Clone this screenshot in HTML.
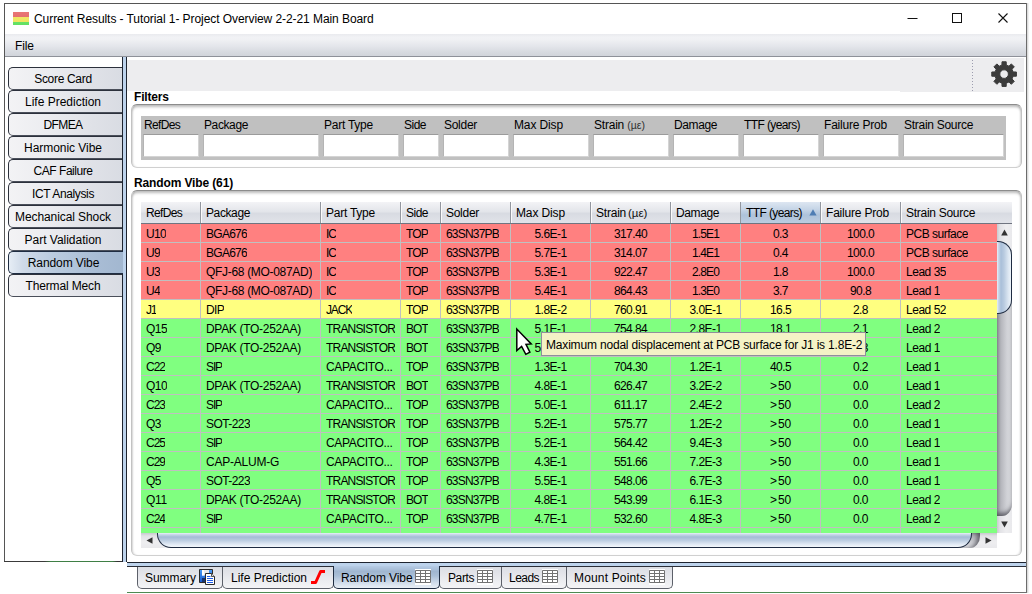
<!DOCTYPE html>
<html><head><meta charset="utf-8"><title>Current Results</title>
<style>
*{box-sizing:border-box;margin:0;padding:0}
html,body{width:1032px;height:594px;overflow:hidden;background:#fff}
body{position:relative;font-family:"Liberation Sans",sans-serif;font-size:12px;color:#000;line-height:1}
.abs{position:absolute}
.t{position:absolute;white-space:nowrap;line-height:14px;height:14px}
/* window frame */
#frameL{left:4px;top:3px;width:1px;height:559px;background:#555}
#frameT{left:4px;top:3px;width:1023px;height:1px;background:#555}
#frameR{left:1026px;top:3px;width:1px;height:590px;background:#6c6c6c;box-shadow:1px 0 0 #dcdcdc,2px 0 0 #f0f0f0}
#frameB{left:4px;top:561px;width:123px;height:1px;background:linear-gradient(90deg,#3a3a3a 0,#3a3a3a 33%,#3f7f45 38%,#3f7f45 88%,#333 92%)}
#botline{left:127px;top:592px;width:900px;height:1px;background:linear-gradient(90deg,#4e8a52 0,#4e8a52 85%,#707070 97%)}
/* menubar */
#menubar{left:5px;top:34px;width:1021px;height:22px;background:linear-gradient(#e9eaee 0%,#f1f2f5 14%,#f0f1f4 25%,#e4e6eb 55%,#d6d9df 85%,#d1d4db 100%)}
#menuline{left:5px;top:56px;width:1021px;height:1px;background:#8e9199}
/* splitter */
#spl1{left:122px;top:57px;width:1px;height:505px;background:#1e2430}
#spl2{left:123px;top:57px;width:3px;height:505px;background:#bdd3ec}
#spl3{left:126px;top:57px;width:1px;height:505px;background:#1e2430}
/* side tabs */
.stab{position:absolute;left:8px;width:114px;height:23px;border:1px solid #2c313c;border-bottom-color:#4a4f5a;border-right:none;border-radius:5px 0 0 5px;background:linear-gradient(90deg,#f3f3f5 0%,#ebecf0 35%,#dfe1e7 75%,#d9dce3 100%);text-align:center;line-height:23px;padding-right:5px}
.stab.sel{background:linear-gradient(90deg,#e6edf5 0%,#cfdae8 12%,#b9cade 40%,#a9bdd5 75%,#a2b7d0 100%);width:115px;border-color:#1f2d42;z-index:3}

#tb1{left:127px;top:60px;width:774px;height:31px;background:#ededef}
#tb2{left:900px;top:58px;width:124px;height:34px;background:#ededef}
#tbsep{left:972px;top:60px;width:1px;height:32px;background:repeating-linear-gradient(#9c9cae 0,#9c9cae 1px,transparent 1px,transparent 3px)}
.bold{font-weight:bold}
.mu{font-size:10.5px;color:#303030;letter-spacing:0}
.panel{position:absolute;border:1px solid #c2c2c2;border-top-color:#8c8c8c;border-bottom-color:#d0d0d0;border-radius:6px;background:#fff;box-shadow:inset 0 3px 3px -1px rgba(0,0,0,.27), inset 2px 0 2px -1px rgba(0,0,0,.13), inset -2px 0 2px -1px rgba(0,0,0,.13)}
#fgrey{left:141px;top:116px;width:865px;height:44px;background:#c0c0c0}
.ff{position:absolute;top:134px;height:23px;background:#fff;border:1px solid #d4d4d4;border-top-color:#9b9b9b;border-left-color:#b4b4b4}
.fl{top:118px}
/* table */
#thead{left:141px;top:202px;width:871px;height:22px;background:linear-gradient(#f3f3f6 0%,#e3e5ea 45%,#d8dbe2 55%,#e1e3e9 100%);border-bottom:1px solid #6f7480}
.th{position:absolute;top:202px;height:21px;border-right:1px solid #93979f;box-shadow:1px 0 0 #fafafb}
.th.sorted{background:linear-gradient(#dde6f1 0%,#c2d2e5 40%,#adc2da 62%,#bccde1 100%)}
.tht{top:206px}
.row{position:absolute;left:141px;width:856px;height:19px;border-bottom:1px solid #c0c0c0}
.r{background:#ff8080}.y{background:#ffff80}.g{background:#80ff80}
.vg{position:absolute;top:224px;width:1px;height:309px;background:#c0c0c0}
.c{position:absolute;top:3px;height:14px;line-height:14px;white-space:nowrap;overflow:hidden}
.ctr{text-align:center}

/* scrollbars */
#vsb{left:997px;top:224px;width:15px;height:309px;background:linear-gradient(90deg,#c8c9ce 0,#e2e2e6 3px,#eeeef0 60%,#e9e9ec 100%)}
#hsb{left:141px;top:533px;width:856px;height:15px;background:linear-gradient(#c8c9ce 0,#e2e2e6 3px,#eeeef0 60%,#e9e9ec 100%)}
#vtrack{left:997px;top:250px;width:15px;height:266px;background:linear-gradient(90deg,#96979e 0%,#b4b5bb 25%,#d0d1d6 65%,#dcdde1 100%);border-radius:0 0 10px 0/0 0 12px 0;box-shadow:inset 0 -4px 4px -1px rgba(40,40,50,.6)}
#htrack{left:170px;top:533px;width:810px;height:15px;background:linear-gradient(#96979e 0%,#b4b5bb 25%,#d0d1d6 65%,#dcdde1 100%);border-radius:0 0 10px 0/0 0 12px 0;box-shadow:inset -4px 0 4px -1px rgba(40,40,50,.6)}
#vthumb{left:997px;top:241px;width:15px;height:73px;border:1.4px solid #1f2c42;border-left:none;border-radius:0 14px 14px 0/0 14px 14px 0;background:linear-gradient(90deg,#e8eff7 0,#c9d8e9 1.5px,#a9bfd9 4px,#b9cbe0 50%,#dbe6f2 80%,#edf3f9 100%)}
#hthumb{left:157px;top:533px;width:815px;height:15px;border:1.4px solid #1f2c42;border-top:none;border-radius:0 0 14px 14px/0 0 14px 14px;background:linear-gradient(#e8eff7 0,#c9d8e9 1.5px,#a4bbd6 4px,#b9cbe0 50%,#e0e9f4 80%,#f4f8fc 100%)}
/* tooltip */
#tip{left:541px;top:332px;width:325px;height:24px;background:#f4f2c6;border:1px solid #8f8f9c}
/* bottom tabs */
#bt1{left:127px;top:562px;width:899px;height:1px;background:#1e2430}
#bt2{left:127px;top:563px;width:899px;height:3px;background:#bdd3ec}
#bt3{left:127px;top:566px;width:899px;height:1px;background:#2a2e38;z-index:2}
.btab{position:absolute;top:567px;height:22px;border:1px solid #5c6069;border-top:none;border-radius:0 0 5px 5px;background:linear-gradient(#dcdee4 0%,#e4e5ea 35%,#eeeff2 75%,#f4f4f6 100%)}
.btab.sel{top:566px;height:23px;border-color:#1f2d42;background:linear-gradient(#b6cce6 0%,#a0b6d0 25%,#aabfd7 45%,#cfdbea 75%,#e9eff6 100%);z-index:3}
</style></head>
<body>
<div class="abs" id="frameT"></div><div class="abs" id="frameL"></div><div class="abs" id="frameR"></div><div class="abs" id="frameB"></div><div class="abs" id="botline"></div>
<div class="abs" style="left:13px;top:12px;width:16px;height:13px;background:linear-gradient(#e97676 0,#e57070 5px,#efe766 5px,#f1e560 10px,#66e266 10px,#62e062 13px)"></div>
<div class="t" id="title" style="left:34px;top:12px;letter-spacing:-0.07px">Current Results - Tutorial 1- Project Overview 2-2-21 Main Board</div>
<svg class="abs" style="left:900px;top:8px" width="120" height="22" viewBox="0 0 120 22"><path d="M7.5 10.5h10" stroke="#111" stroke-width="1" fill="none"/><rect x="52.5" y="5.5" width="9" height="9" stroke="#111" stroke-width="1" fill="none"/><path d="M98.5 5.5l9 9M107.5 5.5l-9 9" stroke="#111" stroke-width="1.1" fill="none"/></svg>
<div class="abs" id="menubar"></div><div class="abs" id="menuline"></div>
<div class="t" id="mfile" style="left:15px;top:39px;letter-spacing:-0.1px">File</div>
<div class="abs" id="spl1"></div><div class="abs" id="spl2"></div><div class="abs" id="spl3"></div>
<div class="stab" style="top:67px"><span style="letter-spacing:-0.32px">Score Card</span></div>
<div class="stab" style="top:90px"><span style="letter-spacing:-0.00px">Life Prediction</span></div>
<div class="stab" style="top:113px"><span style="letter-spacing:-0.60px">DFMEA</span></div>
<div class="stab" style="top:136px"><span style="letter-spacing:-0.04px">Harmonic Vibe</span></div>
<div class="stab" style="top:159px"><span style="letter-spacing:-0.46px">CAF Failure</span></div>
<div class="stab" style="top:182px"><span style="letter-spacing:-0.37px">ICT Analysis</span></div>
<div class="stab" style="top:205px"><span style="letter-spacing:-0.09px">Mechanical Shock</span></div>
<div class="stab" style="top:228px"><span style="letter-spacing:-0.01px">Part Validation</span></div>
<div class="stab sel" style="top:251px"><span style="letter-spacing:-0.09px">Random Vibe</span></div>
<div class="stab" style="top:274px"><span style="letter-spacing:-0.14px">Thermal Mech</span></div>
<div class="abs" id="tb1"></div><div class="abs" id="tb2"></div><div class="abs" id="tbsep"></div>
<svg class="abs" style="left:989px;top:59px" width="30" height="30" viewBox="0 0 30 30"><path d="M12.93 6.06 L13.00 2.78 L17.20 2.78 L17.27 6.06 L19.96 7.17 L22.33 4.90 L25.30 7.87 L23.03 10.24 L24.14 12.93 L27.42 13.00 L27.42 17.20 L24.14 17.27 L23.03 19.96 L25.30 22.33 L22.33 25.30 L19.96 23.03 L17.27 24.14 L17.20 27.42 L13.00 27.42 L12.93 24.14 L10.24 23.03 L7.87 25.30 L4.90 22.33 L7.17 19.96 L6.06 17.27 L2.78 17.20 L2.78 13.00 L6.06 12.93 L7.17 10.24 L4.90 7.87 L7.87 4.90 L10.24 7.17Z M19.40 15.10 A4.3 4.3 0 1 0 10.80 15.10 A4.3 4.3 0 1 0 19.40 15.10Z" fill="#3b3b3b" fill-rule="evenodd" stroke="#3b3b3b" stroke-width="1" stroke-linejoin="round"/></svg>
<div class="t bold" id="lfilters" style="left:134px;top:90px;letter-spacing:-0.19px">Filters</div>
<div class="panel" style="left:131px;top:104px;width:891px;height:64px"></div>
<div class="abs" id="fgrey"></div>
<div class="ff" style="left:143px;width:56px"></div>
<div class="t fl" style="left:144px;letter-spacing:-0.67px">RefDes</div>
<div class="ff" style="left:203px;width:116px"></div>
<div class="t fl" style="left:204px;letter-spacing:-0.39px">Package</div>
<div class="ff" style="left:323px;width:76px"></div>
<div class="t fl" style="left:324px;letter-spacing:-0.24px">Part Type</div>
<div class="ff" style="left:403px;width:36px"></div>
<div class="t fl" style="left:404px;letter-spacing:-0.50px">Side</div>
<div class="ff" style="left:443px;width:66px"></div>
<div class="t fl" style="left:444px;letter-spacing:-0.28px">Solder</div>
<div class="ff" style="left:513px;width:76px"></div>
<div class="t fl" style="left:514px;letter-spacing:-0.13px">Max Disp</div>
<div class="ff" style="left:593px;width:76px"></div>
<div class="t fl" style="left:594px;letter-spacing:-0.22px">Strain <span class="mu">(µε)</span></div>
<div class="ff" style="left:673px;width:66px"></div>
<div class="t fl" style="left:674px;letter-spacing:-0.39px">Damage</div>
<div class="ff" style="left:743px;width:76px"></div>
<div class="t fl" style="left:744px;letter-spacing:-0.61px">TTF (years)</div>
<div class="ff" style="left:823px;width:76px"></div>
<div class="t fl" style="left:824px;letter-spacing:-0.20px">Failure Prob</div>
<div class="ff" style="left:903px;width:101px"></div>
<div class="t fl" style="left:904px;letter-spacing:-0.28px">Strain Source</div>
<div class="t bold" id="lrv" style="left:134px;top:176px;letter-spacing:-0.13px">Random Vibe (61)</div>
<div class="panel" style="left:131px;top:190px;width:891px;height:366px"></div>
<div class="abs" id="thead"></div>
<div class="th" style="left:141px;width:60px"></div>
<div class="t tht" style="left:146px;letter-spacing:-0.67px">RefDes</div>
<div class="th" style="left:201px;width:120px"></div>
<div class="t tht" style="left:206px;letter-spacing:-0.39px">Package</div>
<div class="th" style="left:321px;width:80px"></div>
<div class="t tht" style="left:326px;letter-spacing:-0.24px">Part Type</div>
<div class="th" style="left:401px;width:40px"></div>
<div class="t tht" style="left:406px;letter-spacing:-0.50px">Side</div>
<div class="th" style="left:441px;width:70px"></div>
<div class="t tht" style="left:446px;letter-spacing:-0.28px">Solder</div>
<div class="th" style="left:511px;width:80px"></div>
<div class="t tht" style="left:516px;letter-spacing:-0.13px">Max Disp</div>
<div class="th" style="left:591px;width:80px"></div>
<div class="t tht" style="left:596px;letter-spacing:-0.22px">Strain<span class="mu" style="margin-left:2px;font-size:11.5px;color:#111">(µε)</span></div>
<div class="th" style="left:671px;width:70px"></div>
<div class="t tht" style="left:676px;letter-spacing:-0.39px">Damage</div>
<div class="th sorted" style="left:741px;width:80px"></div>
<div class="t tht" style="left:746px;letter-spacing:-0.61px">TTF (years)</div>
<div class="th" style="left:821px;width:80px"></div>
<div class="t tht" style="left:826px;letter-spacing:-0.20px">Failure Prob</div>
<div class="t tht" style="left:906px;letter-spacing:-0.28px">Strain Source</div>
<svg class="abs" style="left:809px;top:209px" width="8" height="7" viewBox="0 0 8 7"><path d="M4 0.3L7.6 6.6H0.4Z" fill="#4f7db3"/></svg>
<div class="row r" style="top:224px"><span class="c" style="left:5px;letter-spacing:-0.67px">U10</span><span class="c" style="left:65px;letter-spacing:-0.73px">BGA676</span><span class="c" style="left:185px;letter-spacing:-1.00px">IC</span><span class="c" style="left:265px;letter-spacing:-0.82px">TOP</span><span class="c" style="left:305px;letter-spacing:-0.80px">63SN37PB</span><span class="c ctr" style="left:370px;width:79px;letter-spacing:-0.56px">5.6E-1</span><span class="c ctr" style="left:450px;width:79px;letter-spacing:-0.62px">317.40</span><span class="c ctr" style="left:530px;width:69px;letter-spacing:-0.87px">1.5E1</span><span class="c ctr" style="left:600px;width:79px;letter-spacing:-0.56px">0.3</span><span class="c ctr" style="left:680px;width:79px;letter-spacing:-0.61px">100.0</span><span class="c" style="left:765px;letter-spacing:-0.49px">PCB surface</span></div>
<div class="row r" style="top:243px"><span class="c" style="left:5px;letter-spacing:-0.67px">U9</span><span class="c" style="left:65px;letter-spacing:-0.73px">BGA676</span><span class="c" style="left:185px;letter-spacing:-1.00px">IC</span><span class="c" style="left:265px;letter-spacing:-0.82px">TOP</span><span class="c" style="left:305px;letter-spacing:-0.80px">63SN37PB</span><span class="c ctr" style="left:370px;width:79px;letter-spacing:-0.56px">5.7E-1</span><span class="c ctr" style="left:450px;width:79px;letter-spacing:-0.62px">314.07</span><span class="c ctr" style="left:530px;width:69px;letter-spacing:-0.87px">1.4E1</span><span class="c ctr" style="left:600px;width:79px;letter-spacing:-0.56px">0.4</span><span class="c ctr" style="left:680px;width:79px;letter-spacing:-0.61px">100.0</span><span class="c" style="left:765px;letter-spacing:-0.49px">PCB surface</span></div>
<div class="row r" style="top:262px"><span class="c" style="left:5px;letter-spacing:-0.67px">U3</span><span class="c" style="left:65px;letter-spacing:-0.31px">QFJ-68 (MO-087AD)</span><span class="c" style="left:185px;letter-spacing:-1.00px">IC</span><span class="c" style="left:265px;letter-spacing:-0.82px">TOP</span><span class="c" style="left:305px;letter-spacing:-0.80px">63SN37PB</span><span class="c ctr" style="left:370px;width:79px;letter-spacing:-0.56px">5.3E-1</span><span class="c ctr" style="left:450px;width:79px;letter-spacing:-0.62px">922.47</span><span class="c ctr" style="left:530px;width:69px;letter-spacing:-0.87px">2.8E0</span><span class="c ctr" style="left:600px;width:79px;letter-spacing:-0.56px">1.8</span><span class="c ctr" style="left:680px;width:79px;letter-spacing:-0.61px">100.0</span><span class="c" style="left:765px;letter-spacing:-0.48px">Lead 35</span></div>
<div class="row r" style="top:281px"><span class="c" style="left:5px;letter-spacing:-0.67px">U4</span><span class="c" style="left:65px;letter-spacing:-0.31px">QFJ-68 (MO-087AD)</span><span class="c" style="left:185px;letter-spacing:-1.00px">IC</span><span class="c" style="left:265px;letter-spacing:-0.82px">TOP</span><span class="c" style="left:305px;letter-spacing:-0.80px">63SN37PB</span><span class="c ctr" style="left:370px;width:79px;letter-spacing:-0.56px">5.4E-1</span><span class="c ctr" style="left:450px;width:79px;letter-spacing:-0.62px">864.43</span><span class="c ctr" style="left:530px;width:69px;letter-spacing:-0.87px">1.3E0</span><span class="c ctr" style="left:600px;width:79px;letter-spacing:-0.56px">3.7</span><span class="c ctr" style="left:680px;width:79px;letter-spacing:-0.59px">90.8</span><span class="c" style="left:765px;letter-spacing:-0.45px">Lead 1</span></div>
<div class="row y" style="top:300px"><span class="c" style="left:5px;letter-spacing:-1.34px">J1</span><span class="c" style="left:65px;letter-spacing:-0.67px">DIP</span><span class="c" style="left:185px;letter-spacing:-1.17px">JACK</span><span class="c" style="left:265px;letter-spacing:-0.82px">TOP</span><span class="c" style="left:305px;letter-spacing:-0.80px">63SN37PB</span><span class="c ctr" style="left:370px;width:79px;letter-spacing:-0.56px">1.8E-2</span><span class="c ctr" style="left:450px;width:79px;letter-spacing:-0.62px">760.91</span><span class="c ctr" style="left:530px;width:69px;letter-spacing:-0.56px">3.0E-1</span><span class="c ctr" style="left:600px;width:79px;letter-spacing:-0.59px">16.5</span><span class="c ctr" style="left:680px;width:79px;letter-spacing:-0.56px">2.8</span><span class="c" style="left:765px;letter-spacing:-0.48px">Lead 52</span></div>
<div class="row g" style="top:319px"><span class="c" style="left:5px;letter-spacing:-0.56px">Q15</span><span class="c" style="left:65px;letter-spacing:-0.31px">DPAK (TO-252AA)</span><span class="c" style="left:185px;letter-spacing:-0.81px">TRANSISTOR</span><span class="c" style="left:265px;letter-spacing:-0.89px">BOT</span><span class="c" style="left:305px;letter-spacing:-0.80px">63SN37PB</span><span class="c ctr" style="left:370px;width:79px;letter-spacing:-0.56px">5.1E-1</span><span class="c ctr" style="left:450px;width:79px;letter-spacing:-0.62px">754.84</span><span class="c ctr" style="left:530px;width:69px;letter-spacing:-0.56px">2.8E-1</span><span class="c ctr" style="left:600px;width:79px;letter-spacing:-0.59px">18.1</span><span class="c ctr" style="left:680px;width:79px;letter-spacing:-0.56px">2.1</span><span class="c" style="left:765px;letter-spacing:-0.45px">Lead 2</span></div>
<div class="row g" style="top:338px"><span class="c" style="left:5px;letter-spacing:-0.50px">Q9</span><span class="c" style="left:65px;letter-spacing:-0.31px">DPAK (TO-252AA)</span><span class="c" style="left:185px;letter-spacing:-0.81px">TRANSISTOR</span><span class="c" style="left:265px;letter-spacing:-0.89px">BOT</span><span class="c" style="left:305px;letter-spacing:-0.80px">63SN37PB</span><span class="c ctr" style="left:370px;width:79px;letter-spacing:-0.56px">5.1E-1</span><span class="c ctr" style="left:450px;width:79px;letter-spacing:-0.62px">733.90</span><span class="c ctr" style="left:530px;width:69px;letter-spacing:-0.56px">2.4E-1</span><span class="c ctr" style="left:600px;width:79px;letter-spacing:-0.59px">22.7</span><span class="c ctr" style="left:680px;width:79px;letter-spacing:-0.56px">1.3</span><span class="c" style="left:765px;letter-spacing:-0.45px">Lead 1</span></div>
<div class="row g" style="top:357px"><span class="c" style="left:5px;letter-spacing:-1.00px">C22</span><span class="c" style="left:65px;letter-spacing:-1.11px">SIP</span><span class="c" style="left:185px;letter-spacing:-0.34px">CAPACITO...</span><span class="c" style="left:265px;letter-spacing:-0.82px">TOP</span><span class="c" style="left:305px;letter-spacing:-0.80px">63SN37PB</span><span class="c ctr" style="left:370px;width:79px;letter-spacing:-0.56px">1.3E-1</span><span class="c ctr" style="left:450px;width:79px;letter-spacing:-0.62px">704.30</span><span class="c ctr" style="left:530px;width:69px;letter-spacing:-0.56px">1.2E-1</span><span class="c ctr" style="left:600px;width:79px;letter-spacing:-0.59px">40.5</span><span class="c ctr" style="left:680px;width:79px;letter-spacing:-0.56px">0.2</span><span class="c" style="left:765px;letter-spacing:-0.45px">Lead 1</span></div>
<div class="row g" style="top:376px"><span class="c" style="left:5px;letter-spacing:-0.56px">Q10</span><span class="c" style="left:65px;letter-spacing:-0.31px">DPAK (TO-252AA)</span><span class="c" style="left:185px;letter-spacing:-0.81px">TRANSISTOR</span><span class="c" style="left:265px;letter-spacing:-0.89px">BOT</span><span class="c" style="left:305px;letter-spacing:-0.80px">63SN37PB</span><span class="c ctr" style="left:370px;width:79px;letter-spacing:-0.56px">4.8E-1</span><span class="c ctr" style="left:450px;width:79px;letter-spacing:-0.62px">626.47</span><span class="c ctr" style="left:530px;width:69px;letter-spacing:-0.56px">3.2E-2</span><span class="c ctr" style="left:600px;width:79px;letter-spacing:-0.12px">&gt;<span style="margin-left:1px">50</span></span><span class="c ctr" style="left:680px;width:79px;letter-spacing:-0.56px">0.0</span><span class="c" style="left:765px;letter-spacing:-0.45px">Lead 1</span></div>
<div class="row g" style="top:395px"><span class="c" style="left:5px;letter-spacing:-1.00px">C23</span><span class="c" style="left:65px;letter-spacing:-1.11px">SIP</span><span class="c" style="left:185px;letter-spacing:-0.34px">CAPACITO...</span><span class="c" style="left:265px;letter-spacing:-0.82px">TOP</span><span class="c" style="left:305px;letter-spacing:-0.80px">63SN37PB</span><span class="c ctr" style="left:370px;width:79px;letter-spacing:-0.56px">5.0E-1</span><span class="c ctr" style="left:450px;width:79px;letter-spacing:-0.47px">611.17</span><span class="c ctr" style="left:530px;width:69px;letter-spacing:-0.56px">2.4E-2</span><span class="c ctr" style="left:600px;width:79px;letter-spacing:-0.12px">&gt;<span style="margin-left:1px">50</span></span><span class="c ctr" style="left:680px;width:79px;letter-spacing:-0.56px">0.0</span><span class="c" style="left:765px;letter-spacing:-0.45px">Lead 2</span></div>
<div class="row g" style="top:414px"><span class="c" style="left:5px;letter-spacing:-0.50px">Q3</span><span class="c" style="left:65px;letter-spacing:-0.57px">SOT-223</span><span class="c" style="left:185px;letter-spacing:-0.81px">TRANSISTOR</span><span class="c" style="left:265px;letter-spacing:-0.82px">TOP</span><span class="c" style="left:305px;letter-spacing:-0.80px">63SN37PB</span><span class="c ctr" style="left:370px;width:79px;letter-spacing:-0.56px">5.2E-1</span><span class="c ctr" style="left:450px;width:79px;letter-spacing:-0.62px">575.77</span><span class="c ctr" style="left:530px;width:69px;letter-spacing:-0.56px">1.2E-2</span><span class="c ctr" style="left:600px;width:79px;letter-spacing:-0.12px">&gt;<span style="margin-left:1px">50</span></span><span class="c ctr" style="left:680px;width:79px;letter-spacing:-0.56px">0.0</span><span class="c" style="left:765px;letter-spacing:-0.45px">Lead 1</span></div>
<div class="row g" style="top:433px"><span class="c" style="left:5px;letter-spacing:-1.00px">C25</span><span class="c" style="left:65px;letter-spacing:-1.11px">SIP</span><span class="c" style="left:185px;letter-spacing:-0.34px">CAPACITO...</span><span class="c" style="left:265px;letter-spacing:-0.82px">TOP</span><span class="c" style="left:305px;letter-spacing:-0.80px">63SN37PB</span><span class="c ctr" style="left:370px;width:79px;letter-spacing:-0.56px">5.2E-1</span><span class="c ctr" style="left:450px;width:79px;letter-spacing:-0.62px">564.42</span><span class="c ctr" style="left:530px;width:69px;letter-spacing:-0.56px">9.4E-3</span><span class="c ctr" style="left:600px;width:79px;letter-spacing:-0.12px">&gt;<span style="margin-left:1px">50</span></span><span class="c ctr" style="left:680px;width:79px;letter-spacing:-0.56px">0.0</span><span class="c" style="left:765px;letter-spacing:-0.45px">Lead 1</span></div>
<div class="row g" style="top:452px"><span class="c" style="left:5px;letter-spacing:-1.00px">C29</span><span class="c" style="left:65px;letter-spacing:-0.23px">CAP-ALUM-G</span><span class="c" style="left:185px;letter-spacing:-0.34px">CAPACITO...</span><span class="c" style="left:265px;letter-spacing:-0.82px">TOP</span><span class="c" style="left:305px;letter-spacing:-0.80px">63SN37PB</span><span class="c ctr" style="left:370px;width:79px;letter-spacing:-0.56px">4.3E-1</span><span class="c ctr" style="left:450px;width:79px;letter-spacing:-0.62px">551.66</span><span class="c ctr" style="left:530px;width:69px;letter-spacing:-0.56px">7.2E-3</span><span class="c ctr" style="left:600px;width:79px;letter-spacing:-0.12px">&gt;<span style="margin-left:1px">50</span></span><span class="c ctr" style="left:680px;width:79px;letter-spacing:-0.56px">0.0</span><span class="c" style="left:765px;letter-spacing:-0.45px">Lead 1</span></div>
<div class="row g" style="top:471px"><span class="c" style="left:5px;letter-spacing:-0.50px">Q5</span><span class="c" style="left:65px;letter-spacing:-0.57px">SOT-223</span><span class="c" style="left:185px;letter-spacing:-0.81px">TRANSISTOR</span><span class="c" style="left:265px;letter-spacing:-0.82px">TOP</span><span class="c" style="left:305px;letter-spacing:-0.80px">63SN37PB</span><span class="c ctr" style="left:370px;width:79px;letter-spacing:-0.56px">5.5E-1</span><span class="c ctr" style="left:450px;width:79px;letter-spacing:-0.62px">548.06</span><span class="c ctr" style="left:530px;width:69px;letter-spacing:-0.56px">6.7E-3</span><span class="c ctr" style="left:600px;width:79px;letter-spacing:-0.12px">&gt;<span style="margin-left:1px">50</span></span><span class="c ctr" style="left:680px;width:79px;letter-spacing:-0.56px">0.0</span><span class="c" style="left:765px;letter-spacing:-0.45px">Lead 1</span></div>
<div class="row g" style="top:490px"><span class="c" style="left:5px;letter-spacing:-0.26px">Q11</span><span class="c" style="left:65px;letter-spacing:-0.31px">DPAK (TO-252AA)</span><span class="c" style="left:185px;letter-spacing:-0.81px">TRANSISTOR</span><span class="c" style="left:265px;letter-spacing:-0.89px">BOT</span><span class="c" style="left:305px;letter-spacing:-0.80px">63SN37PB</span><span class="c ctr" style="left:370px;width:79px;letter-spacing:-0.56px">4.8E-1</span><span class="c ctr" style="left:450px;width:79px;letter-spacing:-0.62px">543.99</span><span class="c ctr" style="left:530px;width:69px;letter-spacing:-0.56px">6.1E-3</span><span class="c ctr" style="left:600px;width:79px;letter-spacing:-0.12px">&gt;<span style="margin-left:1px">50</span></span><span class="c ctr" style="left:680px;width:79px;letter-spacing:-0.56px">0.0</span><span class="c" style="left:765px;letter-spacing:-0.45px">Lead 2</span></div>
<div class="row g" style="top:509px"><span class="c" style="left:5px;letter-spacing:-1.00px">C24</span><span class="c" style="left:65px;letter-spacing:-1.11px">SIP</span><span class="c" style="left:185px;letter-spacing:-0.34px">CAPACITO...</span><span class="c" style="left:265px;letter-spacing:-0.82px">TOP</span><span class="c" style="left:305px;letter-spacing:-0.80px">63SN37PB</span><span class="c ctr" style="left:370px;width:79px;letter-spacing:-0.56px">4.7E-1</span><span class="c ctr" style="left:450px;width:79px;letter-spacing:-0.62px">532.60</span><span class="c ctr" style="left:530px;width:69px;letter-spacing:-0.56px">4.8E-3</span><span class="c ctr" style="left:600px;width:79px;letter-spacing:-0.12px">&gt;<span style="margin-left:1px">50</span></span><span class="c ctr" style="left:680px;width:79px;letter-spacing:-0.56px">0.0</span><span class="c" style="left:765px;letter-spacing:-0.45px">Lead 2</span></div>
<div class="row g" style="top:528px;height:5px;border-bottom:none"></div>
<div class="vg" style="left:200px"></div>
<div class="vg" style="left:320px"></div>
<div class="vg" style="left:400px"></div>
<div class="vg" style="left:440px"></div>
<div class="vg" style="left:510px"></div>
<div class="vg" style="left:590px"></div>
<div class="vg" style="left:670px"></div>
<div class="vg" style="left:740px"></div>
<div class="vg" style="left:820px"></div>
<div class="vg" style="left:900px"></div>
<div class="abs" id="vsb"></div><div class="abs" id="hsb"></div>
<div class="abs" id="vtrack"></div><div class="abs" id="htrack"></div>
<div class="abs" id="vthumb"></div><div class="abs" id="hthumb"></div>
<svg class="abs" style="left:1001px;top:229px" width="8" height="8" viewBox="0 0 8 8"><path d="M3.5 0.5L6.8 6.5H0.2Z" fill="#333"/></svg>
<svg class="abs" style="left:1001px;top:520px" width="8" height="8" viewBox="0 0 8 8"><path d="M3.5 7.5L6.8 1.5H0.2Z" fill="#333"/></svg>
<svg class="abs" style="left:146px;top:537px" width="8" height="8" viewBox="0 0 8 8"><path d="M0.5 3.5L6.5 0.2V6.8Z" fill="#333"/></svg>
<svg class="abs" style="left:984px;top:537px" width="8" height="8" viewBox="0 0 8 8"><path d="M7.5 3.5L1.5 0.2V6.8Z" fill="#333"/></svg>
<div class="abs" id="tip"></div>
<div class="t" id="tiptxt" style="left:546px;top:338px;letter-spacing:-0.18px">Maximum nodal displacement at PCB surface for J1 is 1.8E-2</div>
<svg class="abs" style="left:512px;top:324px;z-index:9" width="24" height="36" viewBox="-4 -3.1 24 36"><path d="M0.8 1.9L0.8 23.4L5.6 19.3L9.8 27.2L13.9 25.0L10.0 17.2L15.2 16.8Z" fill="#fff" stroke="#000" stroke-width="1.5" stroke-linejoin="miter"/></svg>
<div class="abs" id="bt1"></div><div class="abs" id="bt2"></div><div class="abs" id="bt3"></div>
<div class="btab" style="left:137px;width:86px"></div>
<div class="t bt" style="left:145px;top:571px;z-index:4;letter-spacing:-0.05px">Summary</div>
<svg class="abs" style="left:199px;top:569px;z-index:4" width="17" height="17" viewBox="0 0 17 17"><defs><linearGradient id="fl" x1="0" y1="0" x2="0" y2="1"><stop offset="0" stop-color="#4a9cf6"/><stop offset="1" stop-color="#1658cc"/></linearGradient></defs><path d="M0.5 0.5H13.5V13.5H0.5Z" fill="url(#fl)" stroke="#2b2b2b"/><rect x="3" y="1" width="7" height="5.5" fill="#e9e9ec"/><rect x="3" y="1" width="2" height="5.5" fill="#fff"/><rect x="3" y="9" width="3.5" height="4" fill="#17336e"/><path d="M6.5 4.5H12.5L15.5 7.5V15.5H6.5Z" fill="#fff" stroke="#2b2b2b"/><path d="M12.5 4.5V7.5H15.5" fill="#ddd" stroke="#2b2b2b" stroke-width="0.8"/><path d="M8 7.5H11.5M8 9.5H14M8 11.5H14M8 13.5H14" stroke="#1f5fe8" stroke-width="1.1"/></svg>
<div class="btab" style="left:222px;width:112px"></div>
<div class="t bt" style="left:231px;top:571px;z-index:4;letter-spacing:-0.00px">Life Prediction</div>
<svg class="abs" style="left:311px;top:569px;z-index:4" width="15" height="16" viewBox="0 0 15 16"><path d="M0 13.5H4.6L9.6 2.5H14" stroke="#ff0000" stroke-width="3" fill="none" stroke-linejoin="round"/></svg>
<div class="btab sel" style="left:333px;width:107px"></div>
<div class="t bt" style="left:341px;top:571px;z-index:4;letter-spacing:-0.09px">Random Vibe</div>
<svg class="abs" style="left:415px;top:569px;z-index:4" width="16" height="16" viewBox="0 0 16 16"><rect x="0" y="0" width="16" height="16" fill="#fff"/><path d="M0.5 1.5H15.5V13.5H0.5ZM0.5 4.5H15.5M0.5 7.5H15.5M0.5 10.5H15.5M5.5 1.5V13.5M10.5 1.5V13.5" stroke="#727272" stroke-width="1" fill="none"/></svg>
<div class="btab" style="left:439px;width:63px"></div>
<div class="t bt" style="left:448px;top:571px;z-index:4;letter-spacing:-0.40px">Parts</div>
<svg class="abs" style="left:477px;top:569px;z-index:4" width="16" height="16" viewBox="0 0 16 16"><rect x="0" y="0" width="16" height="16" fill="#fff"/><path d="M0.5 1.5H15.5V13.5H0.5ZM0.5 4.5H15.5M0.5 7.5H15.5M0.5 10.5H15.5M5.5 1.5V13.5M10.5 1.5V13.5" stroke="#727272" stroke-width="1" fill="none"/></svg>
<div class="btab" style="left:501px;width:66px"></div>
<div class="t bt" style="left:509px;top:571px;z-index:4;letter-spacing:-0.54px">Leads</div>
<svg class="abs" style="left:542px;top:569px;z-index:4" width="16" height="16" viewBox="0 0 16 16"><rect x="0" y="0" width="16" height="16" fill="#fff"/><path d="M0.5 1.5H15.5V13.5H0.5ZM0.5 4.5H15.5M0.5 7.5H15.5M0.5 10.5H15.5M5.5 1.5V13.5M10.5 1.5V13.5" stroke="#727272" stroke-width="1" fill="none"/></svg>
<div class="btab" style="left:566px;width:107px"></div>
<div class="t bt" style="left:574px;top:571px;z-index:4;letter-spacing:0.16px">Mount Points</div>
<svg class="abs" style="left:649px;top:569px;z-index:4" width="16" height="16" viewBox="0 0 16 16"><rect x="0" y="0" width="16" height="16" fill="#fff"/><path d="M0.5 1.5H15.5V13.5H0.5ZM0.5 4.5H15.5M0.5 7.5H15.5M0.5 10.5H15.5M5.5 1.5V13.5M10.5 1.5V13.5" stroke="#727272" stroke-width="1" fill="none"/></svg>
</body></html>
